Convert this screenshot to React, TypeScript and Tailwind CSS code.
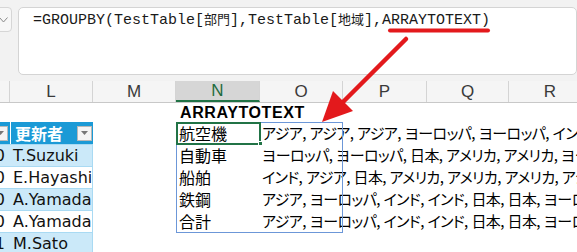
const cols = [
  { name: "", w: "w-[10px]" },
  { name: "L", w: "w-[83px]" },
  { name: "M", w: "w-[83px]" },
  { name: "N", w: "w-[84px]", active: true },
  { name: "O", w: "w-[83px]" },
  { name: "P", w: "w-[84px]" },
  { name: "Q", w: "w-[82px]" },
  { name: "R", w: "w-[83px]" },
];

const users = [
  { k: "0", user: "T.Suzuki", band: true },
  { k: "0", user: "E.Hayashi", band: false },
  { k: "0", user: "A.Yamada", band: true },
  { k: "0", user: "A.Yamada", band: false },
  { k: "1", user: "M.Sato", band: true },
];

const groups = [
  { label: "航空機", text: "アジア, アジア, アジア, ヨーロッパ, ヨーロッパ, インド, インド, 日本" },
  { label: "自動車", text: "ヨーロッパ, ヨーロッパ, 日本, アメリカ, アメリカ, ヨーロッパ, アジア" },
  { label: "船舶", text: "インド, アジア, 日本, アメリカ, アメリカ, アメリカ, アジア, 日本" },
  { label: "鉄鋼", text: "アジア, ヨーロッパ, インド, インド, 日本, 日本, ヨーロッパ, アジア" },
  { label: "合計", text: "アジア, ヨーロッパ, インド, インド, 日本, 日本, ヨーロッパ, アジア" },
];

const jp = "font-['Noto_Sans_CJK_JP',sans-serif]";
const latin = "font-['DejaVu_Sans','Noto_Sans_CJK_JP',sans-serif]";

function FilterButton() {
  return (
    <div className="w-[15px] h-[15px] bg-[#f4f4f4] border border-[#b8b8b8] flex items-center justify-center">
      <svg width="7" height="4" viewBox="0 0 7 4">
        <path d="M0 0 L7 0 L3.5 4 Z" fill="#777" />
      </svg>
    </div>
  );
}

function GroupCells({ label, text }: { label: string; text: string }) {
  return (
    <>
      <div className={`w-[84px] shrink-0 pl-[3px] text-[16px] leading-[22px] text-black ${jp}`}>{label}</div>
      <div
        className={`shrink-0 pl-[2px] whitespace-nowrap text-[15px] leading-[22px] tracking-[-0.6px] [word-spacing:1px] text-black [font-feature-settings:'palt'] ${jp}`}
      >
        {text}
      </div>
    </>
  );
}

export default function App() {
  return (
    <div className="relative w-[577px] h-[252px] overflow-hidden bg-white">
      {/* formula bar */}
      <div className="h-[81px] bg-[#f2f2f2] flex pt-[7px]">
        <div className="-ml-[7px] w-[20px] h-[25px] bg-[#f7f7f7] border border-[#d6d6d6] rounded-[4px] flex items-center justify-end pr-[3px]">
          <svg width="9" height="6" viewBox="0 0 9 6">
            <path d="M0.5 0.5 L4.5 5 L8.5 0.5" fill="none" stroke="#8a8a8a" strokeWidth="1" />
          </svg>
        </div>
        <div className="ml-[6px] w-[600px] h-[68px] bg-white border border-[#d4d4d4] rounded-[5px] pl-[14px] pt-[3px]">
          <div className="text-[15px] leading-[20px] text-[#1a1a1a] whitespace-nowrap font-['Liberation_Mono','Noto_Sans_CJK_JP',monospace]">
            =GROUPBY(TestTable[<span className="text-[13px]">部門</span>],TestTable[<span className="text-[13px]">地域</span>],ARRAYTOTEXT)
          </div>
        </div>
      </div>

      {/* column headers */}
      <div className="flex h-[22px] bg-[#f5f5f5] border-b border-[#c8c8c8]">
        {cols.map((c, i) => (
          <div
            key={i}
            className={`${c.w} shrink-0 flex items-center justify-center border-r border-[#d4d4d4] text-[17px] font-['Liberation_Sans',sans-serif] ${
              c.active ? "bg-[#d6d6d6] text-[#1e6b40] border-b-2 border-b-[#217346]" : "text-[#3a3a3a]"
            }`}
          >
            {c.name}
          </div>
        ))}
      </div>

      {/* sheet */}
      <div className="flex h-[19px]">
        <div className="w-[176px] shrink-0" />
        <div className="w-[84px] shrink-0 pl-[4px] whitespace-nowrap text-[16px] leading-[19px] font-bold text-black font-['Liberation_Sans',sans-serif] tracking-[0.6px]">
          ARRAYTOTEXT
        </div>
      </div>

      <div className="flex h-[22px]">
        <div className="w-[10px] shrink-0 flex items-center justify-end pr-[3px] bg-[#1b9ad6] overflow-hidden">
          <div className="-mr-[1px] -ml-[12px]">
            <FilterButton />
          </div>
        </div>
        <div className="w-[83px] shrink-0 bg-[#1b9ad6] border-l border-white flex items-center justify-between pl-[4px] pr-[1px]">
          <span className={`text-[16px] font-bold text-white ${jp}`}>更新者</span>
          <FilterButton />
        </div>
        <div className="w-[83px] shrink-0" />
        <GroupCells label={groups[0].label} text={groups[0].text} />
      </div>

      {users.map((r, i) => (
        <div key={i} className="flex h-[22px]">
          <div
            className={`w-[10px] shrink-0 flex items-center justify-end pr-[5px] overflow-hidden text-[16px] text-[#111] ${latin} ${
              r.band ? "bg-[#cbe9f9]" : "bg-white"
            } border-t border-[#a9daf3]`}
          >
            <span className="-ml-[10px]">{r.k}</span>
          </div>
          <div
            className={`w-[83px] shrink-0 flex items-center pl-[3px] whitespace-nowrap text-[16px] text-[#111] ${latin} ${
              r.band ? "bg-[#cbe9f9]" : "bg-white"
            } border-t border-r border-[#a9daf3]`}
          >
            {r.user}
          </div>
          <div className="w-[83px] shrink-0" />
          {groups[i + 1] && <GroupCells label={groups[i + 1].label} text={groups[i + 1].text} />}
        </div>
      ))}

      {/* spill range border */}
      <div className="absolute left-[176px] top-[122px] w-[167px] h-[111px] border border-[#6c97d8] pointer-events-none" />
      {/* active cell */}
      <div className="absolute left-[176px] top-[122px] w-[85px] h-[23px] border-2 border-[#217346] pointer-events-none" />
      <div className="absolute left-[258px] top-[141px] w-[5px] h-[5px] bg-[#217346] border border-white pointer-events-none" />

      {/* annotation */}
      <svg className="absolute inset-0 pointer-events-none" width="577" height="252" viewBox="0 0 577 252">
        <line x1="390" y1="30.5" x2="488" y2="30.5" stroke="#e3191c" strokeWidth="4" strokeLinecap="round" />
        <line x1="406" y1="39" x2="340" y2="105" stroke="#e3191c" strokeWidth="4.5" strokeLinecap="round" />
        <polygon points="322,122 333,91 353,111" fill="#e3191c" />
      </svg>
    </div>
  );
}
